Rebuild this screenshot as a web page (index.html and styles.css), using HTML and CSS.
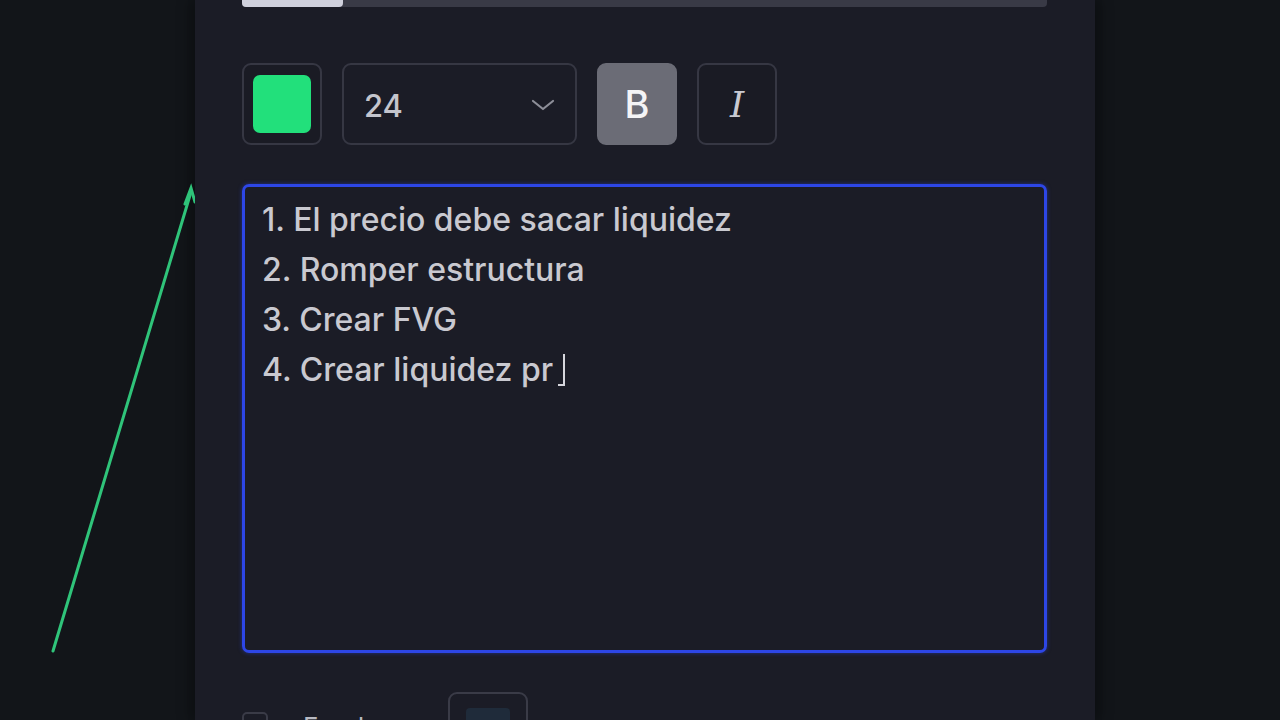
FILE: index.html
```html
<!DOCTYPE html>
<html lang="es">

<head>
    <meta charset="UTF-8">
    <title>Editor de texto</title>
    <link rel="stylesheet" href="styles.css">
</head>

<body>
    <div class="chart-left">
        <svg class="drawing" width="195" height="720" viewBox="0 0 195 720">
            <line x1="53" y1="651" x2="191" y2="192" stroke="#2fc47a" stroke-width="3" stroke-linecap="round" />
            <path d="M185 204 L191 188 L195 202" fill="none" stroke="#2fc47a" stroke-width="3" stroke-linecap="round" />
        </svg>
    </div>

    <div class="panel">
        <div class="slider">
            <div class="slider-fill"></div>
        </div>

        <div class="toolbar">
            <button class="tool color-btn"><span class="swatch"></span></button>
            <div class="size-select">
                <span>24</span>
                <svg width="28" height="16" viewBox="0 0 28 16">
                    <path d="M4 4 L14 12 L24 4" fill="none" stroke="#8d8e98" stroke-width="2.2" stroke-linecap="round" stroke-linejoin="round" />
                </svg>
            </div>
            <button class="tool bold-btn">B</button>
            <button class="tool italic-btn">I</button>
        </div>

        <div class="text-box">
            <p>1. El precio debe sacar liquidez</p>
            <p>2. Romper estructura</p>
            <p>3. Crear FVG</p>
            <p>4. Crear liquidez pr<span class="caret"></span></p>
        </div>

        <div class="bottom-row">
            <span class="check"></span>
            <span class="check-label">Fondo</span>
            <span class="bg-btn"><span class="bg-inner"></span></span>
        </div>
    </div>

    <div class="chart-right"></div>
</body>

</html>
```

FILE: styles.css
```css
body {
    margin: 0;
    height: 720px;
    overflow: hidden;
    background: #121519;
    display: flex;
    font-family: Inter, 'Noto Sans', sans-serif;
}

.chart-left {
    width: 195px;
    position: relative;
    flex-shrink: 0;
}

.drawing {
    position: absolute;
    left: 0;
    top: 0;
}

.panel {
    width: 900px;
    flex-shrink: 0;
    background: #1b1c26;
    box-shadow: -6px 0 12px rgba(0, 0, 0, 0.25), 6px 0 12px rgba(0, 0, 0, 0.25);
    padding: 0 48px 0 47px;
    box-sizing: border-box;
    display: flex;
    flex-direction: column;
}

.panel > * {
    flex-shrink: 0;
}

.chart-right {
    flex: 1;
}

.slider {
    height: 7px;
    background: #393a46;
    border-radius: 0 0 4px 4px;
    display: flex;
}

.slider-fill {
    width: 101px;
    background: #cfd0dc;
    border-radius: 0 0 4px 4px;
}

.toolbar {
    margin-top: 56px;
    display: flex;
    gap: 20px;
    height: 82px;
}

.tool {
    width: 80px;
    height: 82px;
    box-sizing: border-box;
    border: 2px solid #363743;
    border-radius: 9px;
    background: #1a1b24;
    padding: 0;
    display: flex;
    align-items: center;
    justify-content: center;
    font-family: Inter, sans-serif;
}

.swatch {
    width: 58px;
    height: 58px;
    background: #22e07b;
    border-radius: 7px;
}

.size-select {
    width: 235px;
    height: 82px;
    box-sizing: border-box;
    border: 2px solid #363743;
    border-radius: 9px;
    display: flex;
    align-items: center;
    justify-content: space-between;
    padding: 2px 18px 0 20px;
    color: #c4c5cd;
    font-size: 31px;
    font-weight: 500;
}

.bold-btn {
    background: #6b6c76;
    border-color: #6b6c76;
    color: #f4f4f6;
    font-size: 38px;
    font-weight: 500;
}

.italic-btn {
    color: #c9cad2;
    font-family: 'DejaVu Serif', serif;
    font-style: italic;
    font-size: 36px;
}

.text-box {
    margin-top: 39px;
    height: 469px;
    box-sizing: border-box;
    border: 3px solid #2d46e6;
    border-radius: 7px;
    padding: 8px 17px;
    box-shadow: 0 0 4px rgba(45, 70, 230, 0.5);
}

.text-box p {
    margin: 0;
    height: 50px;
    line-height: 50px;
    color: #c9c9d0;
    font-size: 32px;
    font-weight: 500;
}

.caret {
    display: inline-block;
    width: 5px;
    height: 30px;
    margin-left: 5px;
    border-right: 2px solid #d6d6dc;
    border-bottom: 2px solid #d6d6dc;
    vertical-align: -5px;
}

.bottom-row {
    margin-top: 39px;
    display: flex;
    align-items: flex-start;
}

.check {
    width: 22px;
    height: 22px;
    margin-top: 20px;
    border: 2px solid #3a3b47;
    border-radius: 5px;
}

.check-label {
    margin: 19px 0 0 35px;
    color: #b8b9c2;
    font-size: 26px;
}

.bg-btn {
    width: 80px;
    height: 60px;
    margin-left: 68px;
    border: 2px solid #3a3b47;
    border-radius: 9px;
    box-sizing: border-box;
    display: flex;
    justify-content: center;
    padding-top: 14px;
}

.bg-inner {
    width: 44px;
    height: 40px;
    background: #1f2b3a;
    border-radius: 4px;
}
```
